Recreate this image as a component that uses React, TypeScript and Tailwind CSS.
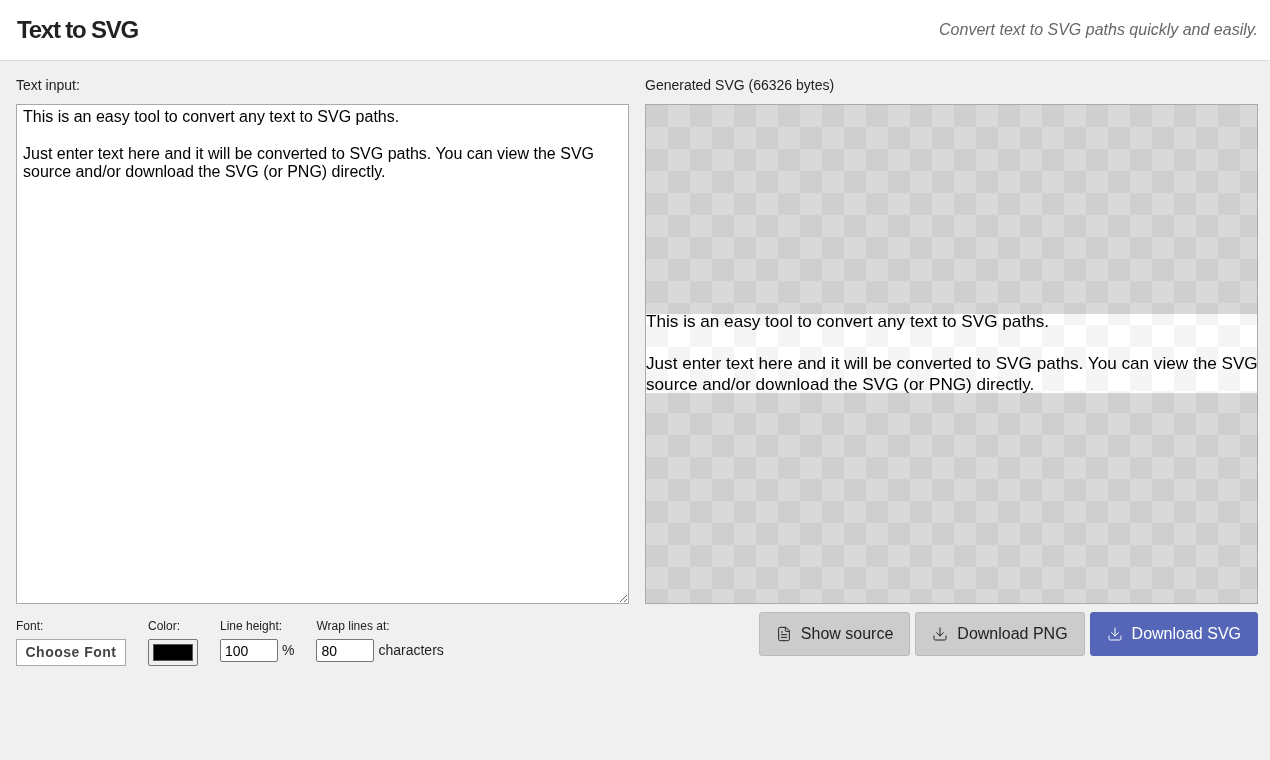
import { Download, FileText } from "lucide-react"

const font = "font-['Liberation_Sans',Arial,sans-serif]"

function ActionButton({
  icon,
  label,
  primary,
}: {
  icon: React.ReactNode
  label: string
  primary?: boolean
}) {
  return (
    <button
      className={
        primary
          ? "h-[44px] px-[16px] flex items-center gap-[9px] rounded-[3px] border border-[#5566b8] bg-[#5566b8] text-white text-[16px]"
          : "h-[44px] px-[16px] flex items-center gap-[9px] rounded-[3px] border border-[#bbbbbb] bg-[#cccccc] text-[#222222] text-[16px]"
      }
    >
      {icon}
      {label}
    </button>
  )
}

export default function App() {
  return (
    <div className={`${font} h-screen bg-[#f0f0f0] text-[#222222] overflow-hidden`}>
      <header className="h-[61px] bg-white border-b border-[#dddddd] pl-[17px] pr-[12px] flex items-center justify-between">
        <h1 className="text-[24px] font-bold tracking-[-1.2px] text-[#222222]">Text to SVG</h1>
        <p className="italic text-[16px] text-[#666666]">Convert text to SVG paths quickly and easily.</p>
      </header>

      <main className="flex gap-[16px] pl-[16px] pr-[12px] pt-[15px]">
        <section className="flex-1 min-w-0">
          <label className="block text-[14px] leading-[18px] mb-[10px]">Text input:</label>
          <textarea
            className="block w-full h-[500px] bg-white border border-[#aaaaaa] px-[6px] py-[3px] text-[16px] leading-[18.4px] text-black outline-none"
            defaultValue={
              "This is an easy tool to convert any text to SVG paths.\n\nJust enter text here and it will be converted to SVG paths. You can view the SVG source and/or download the SVG (or PNG) directly."
            }
          />
          <div className="flex gap-[22px] mt-[15px] text-[12px]">
            <div>
              <div className="leading-[14px] mb-[6px]">Font:</div>
              <button className="w-[110px] h-[27px] bg-white border border-[#aaaaaa] text-[14px] font-bold tracking-[0.5px] text-[#444444]">
                Choose Font
              </button>
            </div>
            <div>
              <div className="leading-[14px] mb-[6px]">Color:</div>
              <div className="w-[50px] h-[27px] rounded-[2px] border border-[#767676] bg-[#efefef] p-[4px]">
                <div className="h-full bg-black border border-[#555555]" />
              </div>
            </div>
            <div>
              <div className="leading-[14px] mb-[6px]">Line height:</div>
              <div className="flex items-center gap-[4px] text-[14px]">
                <input
                  defaultValue="100"
                  className="w-[58px] h-[23px] bg-white border border-[#767676] rounded-[2px] px-[4px] text-[14px] text-black"
                />
                %
              </div>
            </div>
            <div>
              <div className="leading-[14px] mb-[6px]">Wrap lines at:</div>
              <div className="flex items-center gap-[4px] text-[14px]">
                <input
                  defaultValue="80"
                  className="w-[58px] h-[23px] bg-white border border-[#767676] rounded-[2px] px-[4px] text-[14px] text-black"
                />
                characters
              </div>
            </div>
          </div>
        </section>

        <section className="flex-1 min-w-0">
          <label className="block text-[14px] leading-[18px] mb-[10px]">Generated SVG (66326 bytes)</label>
          <div className="h-[500px] border border-[#aaaaaa] pt-[209px] overflow-hidden bg-[#d9d9d9] bg-[conic-gradient(#d9d9d9_25%,#cfcfcf_25%_50%,#d9d9d9_50%_75%,#cfcfcf_75%)] bg-[length:44px_44px] bg-top-left">
            <div className="relative h-[79px] overflow-hidden text-black text-[17.15px] leading-[21px] whitespace-nowrap">
              <div className="absolute inset-0 bg-[#262626] mix-blend-plus-lighter" />
              <div className="relative -mt-[3px]">
                <div>This is an easy tool to convert any text to SVG paths.</div>
                <div className="h-[21px]" />
                <div>Just enter text here and it will be converted to SVG paths. You can view the SVG</div>
                <div>source and/or download the SVG (or PNG) directly.</div>
              </div>
            </div>
          </div>
          <div className="flex justify-end gap-[5px] mt-[8px]">
            <ActionButton icon={<FileText size={16} strokeWidth={1.5} />} label="Show source" />
            <ActionButton icon={<Download size={16} strokeWidth={1.5} />} label="Download PNG" />
            <ActionButton icon={<Download size={16} strokeWidth={1.5} />} label="Download SVG" primary />
          </div>
        </section>
      </main>
    </div>
  )
}
